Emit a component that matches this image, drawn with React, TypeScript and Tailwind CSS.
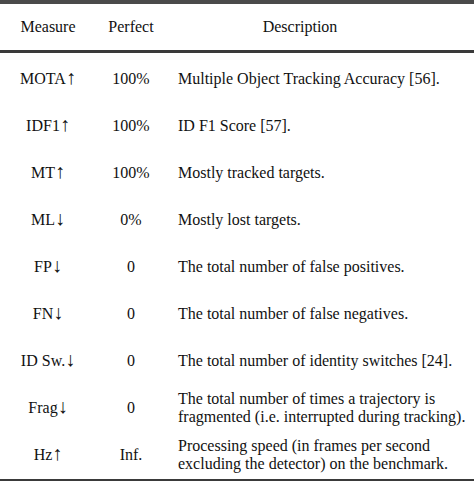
import React from "react";

const A = ({ c }: { c: string }) => (
  <span className="text-[20px] leading-[0px]" style={{ fontFamily: '"Liberation Serif", serif' }}>
    {c}
  </span>
);

const rows: { m: string; a: string; p: string; d: string[] }[] = [
  { m: "MOTA", a: "↑", p: "100%", d: ["Multiple Object Tracking Accuracy [56]."] },
  { m: "IDF1", a: "↑", p: "100%", d: ["ID F1 Score [57]."] },
  { m: "MT", a: "↑", p: "100%", d: ["Mostly tracked targets."] },
  { m: "ML", a: "↓", p: "0%", d: ["Mostly lost targets."] },
  { m: "FP", a: "↓", p: "0", d: ["The total number of false positives."] },
  { m: "FN", a: "↓", p: "0", d: ["The total number of false negatives."] },
  { m: "ID Sw.", a: "↓", p: "0", d: ["The total number of identity switches [24]."] },
  {
    m: "Frag",
    a: "↓",
    p: "0",
    d: ["The total number of times a trajectory is", "fragmented (i.e. interrupted during tracking)."],
  },
  {
    m: "Hz",
    a: "↑",
    p: "Inf.",
    d: ["Processing speed (in frames per second", "excluding the detector) on the benchmark."],
  },
];

export default function App() {
  return (
    <div
      className="w-[474px] h-[481px] bg-white text-[#111] text-[16px] leading-[18px] flex flex-col overflow-hidden"
      style={{ fontFamily: '"Liberation Serif", "Times New Roman", serif' }}
    >
      <div className="h-[4px] shrink-0 bg-[#4a4a4a]" />
      <div className="h-[46px] shrink-0 flex items-center">
        <div className="w-[96px] text-center">Measure</div>
        <div className="w-[70px] text-center">Perfect</div>
        <div className="flex-1 text-center pr-[40px]">Description</div>
      </div>
      <div className="h-[3px] shrink-0 bg-[#3a3a3a]" />
      <div className="flex flex-col pt-[2px] shrink-0">
        {rows.map((r) => (
          <div key={r.m} className="h-[47.1px] shrink-0 flex items-center">
            <div className="w-[96px] text-center">
              {r.m}
              <A c={r.a} />
            </div>
            <div className="w-[70px] text-center">{r.p}</div>
            <div className="flex-1 pl-[12px] whitespace-nowrap">
              {r.d.map((l) => (
                <div key={l}>{l}</div>
              ))}
            </div>
          </div>
        ))}
      </div>
      <div className="h-[4px] shrink-0 bg-[#3a3a3a]" />
    </div>
  );
}
